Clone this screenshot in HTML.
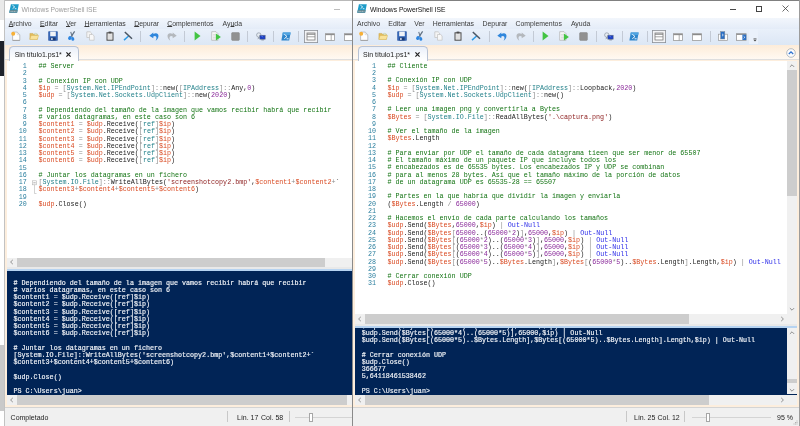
<!DOCTYPE html><html><head><meta charset="utf-8"><title>Windows PowerShell ISE</title><style>
*{box-sizing:border-box}
html,body{margin:0;padding:0}
body{width:800px;height:426px;overflow:hidden;position:relative;background:#fff;font-family:"Liberation Sans",sans-serif;font-size:7px;color:#222}
div,span,svg{position:absolute}
.cl span,.mi u{position:static}
.tt{top:4.6px;font-size:6.7px;line-height:9px;white-space:nowrap}
.mi{top:19.1px;font-size:6.9px;line-height:9px;white-space:nowrap;color:#3a3a3a}
.mi u{text-decoration-thickness:.5px;text-underline-offset:.3px}
.sep{width:1px;height:11px;background:#c3cad5}
.tab{top:46px;height:14.5px;border:1px solid #b7c2d4;border-bottom:none;border-radius:4.5px 4.5px 0 0;background:linear-gradient(#e9eff9,#f8fafd 60%,#fff)}
.tabt{top:49.8px;font-size:7px;line-height:9px;white-space:nowrap;color:#222}
.ln{width:20px;text-align:right;font-family:"Liberation Mono",monospace;font-size:6.7px;line-height:7.25px;height:7.25px;color:#2b7f9e;white-space:pre}
.cl,.co{font-family:"Liberation Mono",monospace;font-size:6.7px;line-height:7.25px;height:7.25px;white-space:pre;color:#1a1a1a}
.co{color:#eef1f6;-webkit-text-stroke:.18px #eef1f6}
.c{color:#127312}.v{color:#d94a22}.t{color:#1f7f88}.s{color:#8b1a1a}.n{color:#8a2a9a}.o{color:#8d8d8d}.k{color:#2a2ae8}
.st{top:413px;font-size:7px;line-height:9px;white-space:nowrap;color:#222}
</style></head><body><div id="root" style="left:0;top:0;width:800px;height:426px;will-change:transform;overflow:hidden">
<div style="left:0px;top:0px;width:5px;height:20px;background:#e9e9e9;"></div>
<div style="left:0px;top:41.2px;width:5px;height:34.8px;background:#1f222a;"></div>
<div style="left:0px;top:345px;width:5px;height:66px;background:#c9c9c9;"></div>
<div style="left:4px;top:0px;width:349px;height:426px;background:#fff;"></div>
<div style="left:4px;top:17.6px;width:349px;height:11.4px;background:linear-gradient(#f2f6fc,#e4ecf8);"></div>
<div style="left:4px;top:29px;width:349px;height:16px;background:linear-gradient(#e9f0fa,#dce7f5);"></div>
<div style="left:4px;top:45px;width:349px;height:15px;background:linear-gradient(#fdecd9,#fef3e6 50%,#fffaf4);"></div>
<div style="left:4px;top:60px;width:349px;height:347px;background:#fdeedd;"></div>
<div style="left:4px;top:59.2px;width:349px;height:1.3px;background:#dedede;"></div>
<div style="left:4px;top:407px;width:349px;height:19px;background:#f0f0f0;"></div>
<div style="left:4px;top:406.8px;width:349px;height:0.8px;background:#d4d4d4;"></div>
<svg class="ic" style="left:9px;top:4.3px" width="10" height="9" viewBox="0 0 10 9"><path d="M1.900.3h7.900L8.100 8.700H.2z" fill="#1f9cc9"/><path d="M.9 6.100h7.700l-.5 2.600H.2z" fill="#5f8793"/><path d="M1.500 7.400h5.800" stroke="#c9d6da" stroke-width=".7" stroke-dasharray="1.200 .5"/><path d="M3.400 1.200l2.300 1.700-2.100 1.700M5.800 4.700h1.600" stroke="#fff" stroke-width=".8" fill="none"/></svg>
<span class="tt" style="left:21.6px;color:#9b9b9b">Windows PowerShell ISE</span>
<span class="mi" style="left:8.7px"><u>A</u>rchivo</span>
<span class="mi" style="left:40.0px"><u>E</u>ditar</span>
<span class="mi" style="left:66.0px"><u>V</u>er</span>
<span class="mi" style="left:84.4px"><u>H</u>erramientas</span>
<span class="mi" style="left:134.2px"><u>D</u>epurar</span>
<span class="mi" style="left:167.2px"><u>C</u>omplementos</span>
<span class="mi" style="left:222.6px">Ay<u>u</u>da</span>
<svg class="ic" style="left:10.8px;top:31.2px" width="10" height="10" viewBox="0 0 10 10"><path d="M1.600 1.100h4.600l2.600 2.600v5.600H1.600z" fill="#fdfdfd" stroke="#a9a9a9" stroke-width=".7"/><path d="M1.600 9.500h7.200" stroke="#8f8f8f" stroke-width=".6"/><path d="M6.200 1.100v2.600h2.600" fill="none" stroke="#c4c4c4" stroke-width=".5"/><circle cx="2.200" cy="2.700" r="2" fill="#f8b035"/></svg>
<svg class="ic" style="left:29.4px;top:31.7px" width="10.2" height="8.6" viewBox="0 0 11 9"><path d="M1 1.400h3.200l.8.900h4v5.400H1z" fill="#e3bd5c" stroke="#c9a446" stroke-width=".5"/><path d="M6.300 1.100l2.300.6-.3 1.400-2.300-.4z" fill="#eef3e4" stroke="#a9c08c" stroke-width=".4"/><path d="M.9 7.900l1.300-4.300h8.200l-1.400 4.300z" fill="#f9e39b" stroke="#d6b252" stroke-width=".5"/></svg>
<svg class="ic" style="left:48.4px;top:31.3px" width="10" height="10" viewBox="0 0 10 10"><rect x=".5" y=".4" width="9" height="9.200" rx=".6" fill="#3567b8" stroke="#2a55a0" stroke-width=".5"/><rect x="2.200" y=".6" width="5.600" height="4.600" fill="#f1f3f7"/><rect x="2.400" y="6.400" width="5.200" height="3.100" fill="#1b3a75"/><rect x="3.200" y="6.900" width="1.400" height="2.100" fill="#e4e9f3"/></svg>
<svg class="ic" style="left:67.0px;top:31.3px" width="9" height="10" viewBox="0 0 9 10"><path d="M7.600.4L4.200 5.600" stroke="#5f6f80" stroke-width="1.200" fill="none"/><path d="M3.700.9L5.200 5.600" stroke="#6c7c8e" stroke-width="1.100" fill="none"/><ellipse cx="2.900" cy="7" rx="1.700" ry="2" transform="rotate(35 2.900 7)" fill="#2f86e0"/><ellipse cx="5.800" cy="7.900" rx="1.500" ry="1.900" transform="rotate(-10 5.800 7.900)" fill="#2f86e0"/></svg>
<svg class="ic" style="left:85.9px;top:31.3px" width="9" height="10" viewBox="0 0 9 10"><path d="M.8.8h3.400l1.300 1.300v4.400H.8z" fill="#f4f4f4" stroke="#c2c2c2" stroke-width=".7"/><path d="M3.500 3.500h3.200l1.400 1.400v4.300H3.500z" fill="#f8f8f8" stroke="#c2c2c2" stroke-width=".7"/></svg>
<svg class="ic" style="left:105.7px;top:31.3px" width="8" height="10" viewBox="0 0 8 10"><rect x="1" y="1.800" width="6" height="7.400" fill="#e9e9e9" stroke="#4a4a4a" stroke-width="1"/><path d="M3 3v5.600M5 3v5.600M1.500 5h5M1.500 7h5" stroke="#d2d2d2" stroke-width=".4"/><rect x="2.600" y=".6" width="2.800" height="1.800" fill="#4a4a4a"/></svg>
<svg class="ic" style="left:123.0px;top:31.3px" width="10" height="10" viewBox="0 0 10 10"><path d="M5.900 4.700L1 9.100" stroke="#2e9be6" stroke-width="1.500" fill="none"/><path d="M1.800 1L9 7.800" stroke="#4b5663" stroke-width="1.500" fill="none"/></svg>
<div class="sep" style="left:140.4px;top:30.8px"></div>
<svg class="ic" style="left:148.6px;top:31.3px" width="10" height="10" viewBox="0 0 10 10"><path d="M.3 4.700L4.300 1.500v1.500C7.500 1.200 10 3 9.400 5.800 9.100 7.500 8 9 6.600 9.800 7.600 8 7.800 6.500 7 5.600 6.400 4.900 5.400 4.900 4.300 5.600v1.700z" fill="#2f86dc"/></svg>
<svg class="ic" style="left:167.3px;top:31.3px" width="10" height="10" viewBox="0 0 10 10"><g transform="translate(10,0) scale(-1,1)"><path d="M.3 4.700L4.300 1.500v1.500C7.500 1.200 10 3 9.400 5.800 9.100 7.500 8 9 6.600 9.800 7.600 8 7.800 6.500 7 5.600 6.400 4.900 5.400 4.900 4.300 5.600v1.700z" fill="#b4b8bd"/></g></svg>
<div class="sep" style="left:184.20000000000002px;top:30.8px"></div>
<svg class="ic" style="left:193.5px;top:31.3px" width="7" height="10" viewBox="0 0 7 10"><path d="M.6.500L6.500 5 .6 9.500z" fill="#43c443"/></svg>
<svg class="ic" style="left:210.9px;top:31.3px" width="10" height="10" viewBox="0 0 10 10"><path d="M.7.700h4.300l2 2v6.600H.7z" fill="#fafafa" stroke="#b0b0b0" stroke-width=".7"/><path d="M1.900 3.400h3M1.900 4.900h3M1.900 6.400h3M1.900 7.900h3" stroke="#c0c0c0" stroke-width=".5"/><path d="M4.900 2.600L9.900 6 4.900 9.500z" fill="#43c443"/></svg>
<svg class="ic" style="left:230.8px;top:31.8px" width="9" height="9" viewBox="0 0 9 9"><rect x=".6" y=".6" width="7.800" height="7.800" rx=".8" fill="#919191" stroke="#858585" stroke-width=".5"/></svg>
<div class="sep" style="left:247.4px;top:30.8px"></div>
<svg class="ic" style="left:255.5px;top:31.8px" width="10" height="9" viewBox="0 0 10 9"><circle cx="2.800" cy="3" r="2.200" fill="#e6ecf3" stroke="#8b95a2" stroke-width=".7"/><path d="M2.200 5L1.600 7.500l1.800-1.800z" fill="#8b95a2"/><rect x="3.800" y="3.200" width="5.400" height="4" fill="#1d3fc0" stroke="#6a7484" stroke-width=".5"/><path d="M5.200 3.800l2 1.400" stroke="#5f86ff" stroke-width=".7"/><rect x="5.300" y="7.500" width="2.600" height=".8" fill="#6a7484"/></svg>
<div class="sep" style="left:273.2px;top:30.8px"></div>
<svg class="ic" style="left:281.0px;top:31.8px" width="10" height="9" viewBox="0 0 10 9"><path d="M1.800.6h7.800L8.200 8.400H.4z" fill="#2f86cc"/><path d="M1.800.6h7.800L9.200 3H1.400z" fill="#4fa3e0"/><path d="M3.300 2.300L6 4.500 3.300 6.700M5.600 6.800h2" stroke="#fff" stroke-width=".9" fill="none"/></svg>
<div class="sep" style="left:298.4px;top:30.8px"></div>
<svg class="ic" style="left:304.0px;top:29.8px" width="14" height="13" viewBox="0 0 14 13"><rect x=".4" y=".4" width="13.200" height="12.200" fill="#f3f4f6" stroke="#8d9096" stroke-width=".8"/><rect x="3" y="3" width="8" height="7" fill="#fff" stroke="#7c7c7c" stroke-width=".8"/><path d="M3 4.200h8" stroke="#7c7c7c" stroke-width="1"/><path d="M3 6.800h8" stroke="#7c7c7c" stroke-width=".7"/></svg>
<svg class="ic" style="left:324.8px;top:32.9px" width="10" height="8" viewBox="0 0 10 8"><rect x=".5" y=".6" width="9" height="6.800" fill="#fff" stroke="#9c9c9c" stroke-width=".8"/><path d="M.5 1.600h9" stroke="#8a8a8a" stroke-width="1.100"/><path d="M6.200 1.600v5.800" stroke="#8a8a8a" stroke-width=".7"/></svg>
<svg class="ic" style="left:343.5px;top:32.9px" width="10" height="8" viewBox="0 0 10 8"><rect x=".5" y=".6" width="9" height="6.800" fill="#fff" stroke="#9c9c9c" stroke-width=".8"/><path d="M.5 1.600h9" stroke="#8a8a8a" stroke-width="1.200"/></svg>
<div class="tab" style="left:9.2px;width:70.3px"></div>
<span class="tabt" style="left:14.7px">Sin título1.ps1*</span>
<svg class="ic" style="left:66.2px;top:51.8px" width="5" height="5" viewBox="0 0 5 5"><path d="M.4 .4L4.600 4.600M4.600 .4L.4 4.600" stroke="#222" stroke-width="1.200"/></svg>
<div style="left:7px;top:60.5px;width:346px;height:197.0px;background:#fff;"></div>
<div class="ln" style="top:63.00px;left:6.800000000000001px">1</div>
<div class="cl" style="top:63.00px;left:38.5px"><span class="c">## Server</span></div>
<div class="ln" style="top:70.25px;left:6.800000000000001px">2</div>
<div class="ln" style="top:77.50px;left:6.800000000000001px">3</div>
<div class="cl" style="top:77.50px;left:38.5px"><span class="c"># Conexión IP con UDP</span></div>
<div class="ln" style="top:84.75px;left:6.800000000000001px">4</div>
<div class="cl" style="top:84.75px;left:38.5px"><span class="v">$ip</span> <span class="o">=</span> <span class="o">[</span><span class="t">System.Net.IPEndPoint</span><span class="o">]::</span>new(<span class="o">[</span><span class="t">IPAddress</span><span class="o">]::</span>Any,<span class="n">0</span>)</div>
<div class="ln" style="top:92.00px;left:6.800000000000001px">5</div>
<div class="cl" style="top:92.00px;left:38.5px"><span class="v">$udp</span> <span class="o">=</span> <span class="o">[</span><span class="t">System.Net.Sockets.UdpClient</span><span class="o">]::</span>new(<span class="n">2020</span>)</div>
<div class="ln" style="top:99.25px;left:6.800000000000001px">6</div>
<div class="ln" style="top:106.50px;left:6.800000000000001px">7</div>
<div class="cl" style="top:106.50px;left:38.5px"><span class="c"># Dependiendo del tamaño de la imagen que vamos recibir habrá que recibir</span></div>
<div class="ln" style="top:113.75px;left:6.800000000000001px">8</div>
<div class="cl" style="top:113.75px;left:38.5px"><span class="c"># varios datagramas, en este caso son 6</span></div>
<div class="ln" style="top:121.00px;left:6.800000000000001px">9</div>
<div class="cl" style="top:121.00px;left:38.5px"><span class="v">$content1</span> <span class="o">=</span> <span class="v">$udp</span>.Receive(<span class="o">[</span><span class="t">ref</span><span class="o">]</span><span class="v">$ip</span>)</div>
<div class="ln" style="top:128.25px;left:6.800000000000001px">10</div>
<div class="cl" style="top:128.25px;left:38.5px"><span class="v">$content2</span> <span class="o">=</span> <span class="v">$udp</span>.Receive(<span class="o">[</span><span class="t">ref</span><span class="o">]</span><span class="v">$ip</span>)</div>
<div class="ln" style="top:135.50px;left:6.800000000000001px">11</div>
<div class="cl" style="top:135.50px;left:38.5px"><span class="v">$content3</span> <span class="o">=</span> <span class="v">$udp</span>.Receive(<span class="o">[</span><span class="t">ref</span><span class="o">]</span><span class="v">$ip</span>)</div>
<div class="ln" style="top:142.75px;left:6.800000000000001px">12</div>
<div class="cl" style="top:142.75px;left:38.5px"><span class="v">$content4</span> <span class="o">=</span> <span class="v">$udp</span>.Receive(<span class="o">[</span><span class="t">ref</span><span class="o">]</span><span class="v">$ip</span>)</div>
<div class="ln" style="top:150.00px;left:6.800000000000001px">13</div>
<div class="cl" style="top:150.00px;left:38.5px"><span class="v">$content5</span> <span class="o">=</span> <span class="v">$udp</span>.Receive(<span class="o">[</span><span class="t">ref</span><span class="o">]</span><span class="v">$ip</span>)</div>
<div class="ln" style="top:157.25px;left:6.800000000000001px">14</div>
<div class="cl" style="top:157.25px;left:38.5px"><span class="v">$content6</span> <span class="o">=</span> <span class="v">$udp</span>.Receive(<span class="o">[</span><span class="t">ref</span><span class="o">]</span><span class="v">$ip</span>)</div>
<div class="ln" style="top:164.50px;left:6.800000000000001px">15</div>
<div class="ln" style="top:171.75px;left:6.800000000000001px">16</div>
<div class="cl" style="top:171.75px;left:38.5px"><span class="c"># Juntar los datagramas en un fichero</span></div>
<div class="ln" style="top:179.00px;left:6.800000000000001px">17</div>
<div class="cl" style="top:179.00px;left:38.5px"><span class="o">[</span><span class="t">System.IO.File</span><span class="o">]::</span>WriteAllBytes(<span class="s">'screenshotcopy2.bmp'</span>,<span class="v">$content1</span><span class="o">+</span><span class="v">$content2</span><span class="o">+</span>`</div>
<div class="ln" style="top:186.25px;left:6.800000000000001px">18</div>
<div class="cl" style="top:186.25px;left:38.5px"><span class="v">$content3</span><span class="o">+</span><span class="v">$content4</span><span class="o">+</span><span class="v">$content5</span><span class="o">+</span><span class="v">$content6</span>)</div>
<div class="ln" style="top:193.50px;left:6.800000000000001px">19</div>
<div class="ln" style="top:200.75px;left:6.800000000000001px">20</div>
<div class="cl" style="top:200.75px;left:38.5px"><span class="v">$udp</span>.Close()</div>
<div style="left:7px;top:257.5px;width:346px;height:9.5px;background:#f0f0f0;"></div>
<svg class="ic" style="left:9.0px;top:259.3px" width="6" height="6" viewBox="0 0 6 6"><path d="M3.800 .9L1.600 3 3.800 5.100" stroke="#858585" stroke-width=".9" fill="none"/></svg>
<div style="left:7px;top:267.0px;width:346px;height:3.5px;background:#e9e9e9;"></div>
<div style="left:7px;top:268.5px;width:346px;height:2px;background:#b6d3f1;"></div>
<div style="left:7px;top:270.5px;width:346px;height:124.0px;background:#012456;overflow:hidden">
<div class="co" style="top:9.10px;left:6.5px"># Dependiendo del tamaño de la imagen que vamos recibir habrá que recibir</div>
<div class="co" style="top:16.35px;left:6.5px"># varios datagramas, en este caso son 6</div>
<div class="co" style="top:23.60px;left:6.5px">$content1 = $udp.Receive([ref]$ip)</div>
<div class="co" style="top:30.85px;left:6.5px">$content2 = $udp.Receive([ref]$ip)</div>
<div class="co" style="top:38.10px;left:6.5px">$content3 = $udp.Receive([ref]$ip)</div>
<div class="co" style="top:45.35px;left:6.5px">$content4 = $udp.Receive([ref]$ip)</div>
<div class="co" style="top:52.60px;left:6.5px">$content5 = $udp.Receive([ref]$ip)</div>
<div class="co" style="top:59.85px;left:6.5px">$content6 = $udp.Receive([ref]$ip)</div>
<div class="co" style="top:74.35px;left:6.5px"># Juntar los datagramas en un fichero</div>
<div class="co" style="top:81.60px;left:6.5px">[System.IO.File]::WriteAllBytes('screenshotcopy2.bmp',$content1+$content2+`</div>
<div class="co" style="top:88.85px;left:6.5px">$content3+$content4+$content5+$content6)</div>
<div class="co" style="top:103.35px;left:6.5px">$udp.Close()</div>
<div class="co" style="top:117.85px;left:6.5px">PS C:\Users\juan&gt;</div>
</div>
<div style="left:7px;top:394.5px;width:346px;height:10.5px;background:#f0f0f0;"></div>
<svg class="ic" style="left:9.0px;top:396.5px" width="6" height="6" viewBox="0 0 6 6"><path d="M3.800 .9L1.600 3 3.800 5.100" stroke="#858585" stroke-width=".9" fill="none"/></svg>
<div style="left:4px;top:0px;width:350px;height:1px;background:#b9b9b9;"></div>
<div style="left:4px;top:0px;width:1px;height:426px;background:#c2c2c2;"></div>
<svg class="ic" style="left:32.3px;top:179.5px" width="6" height="16" viewBox="0 0 6 16"><rect x=".5" y=".8" width="4" height="4" fill="#fff" stroke="#b5b5b5" stroke-width=".6"/><path d="M1.300 2.800h2.400" stroke="#777" stroke-width=".6"/><path d="M2.500 4.800V13.500H4.500" stroke="#b5b5b5" stroke-width=".6" fill="none"/></svg>
<div style="left:17px;top:257.5px;width:308px;height:9.5px;background:#cdcdcd;"></div>
<div style="left:17px;top:394.5px;width:329.8px;height:10.5px;background:#cdcdcd;"></div>
<div style="left:333.7px;top:8.6px;width:6px;height:0.9px;background:#bdbdbd;"></div>
<span class="st" style="left:10.6px">Completado</span>
<div style="left:227px;top:411px;width:1px;height:11px;background:#c8c8c8;"></div>
<span class="st" style="left:237px">Lín. 17</span><span class="st" style="left:261px">Col. 58</span>
<div style="left:289px;top:411px;width:1px;height:11px;background:#c8c8c8;"></div>
<div style="left:295px;top:416.8px;width:60px;height:0.8px;background:#d4d4d4;"></div>
<div style="left:309px;top:412.5px;width:3.5px;height:9px;background:#fff;border:.7px solid #a6a6a6"></div>
<div style="left:352.3px;top:0px;width:446.7px;height:426px;background:#fff;"></div>
<div style="left:352.3px;top:17.6px;width:446.7px;height:11.4px;background:linear-gradient(#f2f6fc,#e4ecf8);"></div>
<div style="left:352.3px;top:29px;width:446.7px;height:16px;background:linear-gradient(#e9f0fa,#dce7f5);"></div>
<div style="left:352.3px;top:45px;width:446.7px;height:15px;background:linear-gradient(#fdecd9,#fef3e6 50%,#fffaf4);"></div>
<div style="left:352.3px;top:60px;width:446.7px;height:347px;background:#fdeedd;"></div>
<div style="left:352.3px;top:59.2px;width:446.7px;height:1.3px;background:#dedede;"></div>
<div style="left:352.3px;top:407px;width:446.7px;height:19px;background:#f0f0f0;"></div>
<div style="left:352.3px;top:406.8px;width:446.7px;height:0.8px;background:#d4d4d4;"></div>
<svg class="ic" style="left:357.3px;top:4.3px" width="10" height="9" viewBox="0 0 10 9"><path d="M1.900.3h7.900L8.100 8.700H.2z" fill="#1f9cc9"/><path d="M.9 6.100h7.700l-.5 2.600H.2z" fill="#5f8793"/><path d="M1.500 7.400h5.800" stroke="#c9d6da" stroke-width=".7" stroke-dasharray="1.200 .5"/><path d="M3.400 1.200l2.300 1.700-2.100 1.700M5.800 4.700h1.600" stroke="#fff" stroke-width=".8" fill="none"/></svg>
<span class="tt" style="left:369.90000000000003px;color:#111">Windows PowerShell ISE</span>
<span class="mi" style="left:357.0px">Archivo</span>
<span class="mi" style="left:388.3px">Editar</span>
<span class="mi" style="left:414.3px">Ver</span>
<span class="mi" style="left:432.7px">Herramientas</span>
<span class="mi" style="left:482.5px">Depurar</span>
<span class="mi" style="left:515.5px">Complementos</span>
<span class="mi" style="left:570.9px">Ayuda</span>
<svg class="ic" style="left:359.1px;top:31.2px" width="10" height="10" viewBox="0 0 10 10"><path d="M1.600 1.100h4.600l2.600 2.600v5.600H1.600z" fill="#fdfdfd" stroke="#a9a9a9" stroke-width=".7"/><path d="M1.600 9.500h7.200" stroke="#8f8f8f" stroke-width=".6"/><path d="M6.200 1.100v2.600h2.600" fill="none" stroke="#c4c4c4" stroke-width=".5"/><circle cx="2.200" cy="2.700" r="2" fill="#f8b035"/></svg>
<svg class="ic" style="left:377.7px;top:31.7px" width="10.2" height="8.6" viewBox="0 0 11 9"><path d="M1 1.400h3.200l.8.900h4v5.400H1z" fill="#e3bd5c" stroke="#c9a446" stroke-width=".5"/><path d="M6.300 1.100l2.300.6-.3 1.400-2.300-.4z" fill="#eef3e4" stroke="#a9c08c" stroke-width=".4"/><path d="M.9 7.900l1.300-4.300h8.200l-1.400 4.300z" fill="#f9e39b" stroke="#d6b252" stroke-width=".5"/></svg>
<svg class="ic" style="left:396.7px;top:31.3px" width="10" height="10" viewBox="0 0 10 10"><rect x=".5" y=".4" width="9" height="9.200" rx=".6" fill="#3567b8" stroke="#2a55a0" stroke-width=".5"/><rect x="2.200" y=".6" width="5.600" height="4.600" fill="#f1f3f7"/><rect x="2.400" y="6.400" width="5.200" height="3.100" fill="#1b3a75"/><rect x="3.200" y="6.900" width="1.400" height="2.100" fill="#e4e9f3"/></svg>
<svg class="ic" style="left:415.3px;top:31.3px" width="9" height="10" viewBox="0 0 9 10"><path d="M7.600.4L4.200 5.600" stroke="#5f6f80" stroke-width="1.200" fill="none"/><path d="M3.700.9L5.200 5.600" stroke="#6c7c8e" stroke-width="1.100" fill="none"/><ellipse cx="2.900" cy="7" rx="1.700" ry="2" transform="rotate(35 2.900 7)" fill="#2f86e0"/><ellipse cx="5.800" cy="7.900" rx="1.500" ry="1.900" transform="rotate(-10 5.800 7.900)" fill="#2f86e0"/></svg>
<svg class="ic" style="left:434.2px;top:31.3px" width="9" height="10" viewBox="0 0 9 10"><path d="M.8.8h3.400l1.300 1.300v4.400H.8z" fill="#f4f4f4" stroke="#c2c2c2" stroke-width=".7"/><path d="M3.500 3.500h3.200l1.400 1.400v4.300H3.500z" fill="#f8f8f8" stroke="#c2c2c2" stroke-width=".7"/></svg>
<svg class="ic" style="left:454.0px;top:31.3px" width="8" height="10" viewBox="0 0 8 10"><rect x="1" y="1.800" width="6" height="7.400" fill="#e9e9e9" stroke="#4a4a4a" stroke-width="1"/><path d="M3 3v5.600M5 3v5.600M1.500 5h5M1.500 7h5" stroke="#d2d2d2" stroke-width=".4"/><rect x="2.600" y=".6" width="2.800" height="1.800" fill="#4a4a4a"/></svg>
<svg class="ic" style="left:471.3px;top:31.3px" width="10" height="10" viewBox="0 0 10 10"><path d="M5.900 4.700L1 9.100" stroke="#2e9be6" stroke-width="1.500" fill="none"/><path d="M1.800 1L9 7.800" stroke="#4b5663" stroke-width="1.500" fill="none"/></svg>
<div class="sep" style="left:488.7px;top:30.8px"></div>
<svg class="ic" style="left:496.9px;top:31.3px" width="10" height="10" viewBox="0 0 10 10"><path d="M.3 4.700L4.300 1.500v1.500C7.500 1.200 10 3 9.400 5.800 9.100 7.500 8 9 6.600 9.800 7.600 8 7.800 6.500 7 5.600 6.400 4.900 5.400 4.900 4.300 5.600v1.700z" fill="#2f86dc"/></svg>
<svg class="ic" style="left:515.6px;top:31.3px" width="10" height="10" viewBox="0 0 10 10"><g transform="translate(10,0) scale(-1,1)"><path d="M.3 4.700L4.300 1.500v1.500C7.500 1.200 10 3 9.400 5.800 9.100 7.500 8 9 6.600 9.800 7.600 8 7.800 6.500 7 5.600 6.400 4.900 5.400 4.900 4.300 5.600v1.700z" fill="#b4b8bd"/></g></svg>
<div class="sep" style="left:532.5px;top:30.8px"></div>
<svg class="ic" style="left:541.8px;top:31.3px" width="7" height="10" viewBox="0 0 7 10"><path d="M.6.500L6.500 5 .6 9.500z" fill="#43c443"/></svg>
<svg class="ic" style="left:559.2px;top:31.3px" width="10" height="10" viewBox="0 0 10 10"><path d="M.7.700h4.300l2 2v6.600H.7z" fill="#fafafa" stroke="#b0b0b0" stroke-width=".7"/><path d="M1.900 3.400h3M1.900 4.900h3M1.900 6.400h3M1.900 7.900h3" stroke="#c0c0c0" stroke-width=".5"/><path d="M4.900 2.600L9.900 6 4.900 9.500z" fill="#43c443"/></svg>
<svg class="ic" style="left:579.1px;top:31.8px" width="9" height="9" viewBox="0 0 9 9"><rect x=".6" y=".6" width="7.800" height="7.800" rx=".8" fill="#919191" stroke="#858585" stroke-width=".5"/></svg>
<div class="sep" style="left:595.6999999999999px;top:30.8px"></div>
<svg class="ic" style="left:603.8px;top:31.8px" width="10" height="9" viewBox="0 0 10 9"><circle cx="2.800" cy="3" r="2.200" fill="#e6ecf3" stroke="#8b95a2" stroke-width=".7"/><path d="M2.200 5L1.600 7.500l1.800-1.800z" fill="#8b95a2"/><rect x="3.800" y="3.200" width="5.400" height="4" fill="#1d3fc0" stroke="#6a7484" stroke-width=".5"/><path d="M5.200 3.800l2 1.400" stroke="#5f86ff" stroke-width=".7"/><rect x="5.300" y="7.500" width="2.600" height=".8" fill="#6a7484"/></svg>
<div class="sep" style="left:621.5px;top:30.8px"></div>
<svg class="ic" style="left:629.3px;top:31.8px" width="10" height="9" viewBox="0 0 10 9"><path d="M1.800.6h7.800L8.200 8.400H.4z" fill="#2f86cc"/><path d="M1.800.6h7.800L9.200 3H1.400z" fill="#4fa3e0"/><path d="M3.300 2.300L6 4.500 3.300 6.700M5.600 6.800h2" stroke="#fff" stroke-width=".9" fill="none"/></svg>
<div class="sep" style="left:646.6999999999999px;top:30.8px"></div>
<svg class="ic" style="left:652.3px;top:29.8px" width="14" height="13" viewBox="0 0 14 13"><rect x=".4" y=".4" width="13.200" height="12.200" fill="#f3f4f6" stroke="#8d9096" stroke-width=".8"/><rect x="3" y="3" width="8" height="7" fill="#fff" stroke="#7c7c7c" stroke-width=".8"/><path d="M3 4.200h8" stroke="#7c7c7c" stroke-width="1"/><path d="M3 6.800h8" stroke="#7c7c7c" stroke-width=".7"/></svg>
<svg class="ic" style="left:673.1px;top:32.9px" width="10" height="8" viewBox="0 0 10 8"><rect x=".5" y=".6" width="9" height="6.800" fill="#fff" stroke="#9c9c9c" stroke-width=".8"/><path d="M.5 1.600h9" stroke="#8a8a8a" stroke-width="1.100"/><path d="M6.200 1.600v5.800" stroke="#8a8a8a" stroke-width=".7"/></svg>
<svg class="ic" style="left:691.8px;top:32.9px" width="10" height="8" viewBox="0 0 10 8"><rect x=".5" y=".6" width="9" height="6.800" fill="#fff" stroke="#9c9c9c" stroke-width=".8"/><path d="M.5 1.600h9" stroke="#8a8a8a" stroke-width="1.200"/></svg>
<div class="sep" style="left:709.9px;top:30.8px"></div>
<svg class="ic" style="left:717.5px;top:31.3px" width="10" height="10" viewBox="0 0 10 10"><rect x=".6" y="3.200" width="8.800" height="6.200" fill="#fff" stroke="#9a9a9a" stroke-width=".7"/><rect x="2.600" y=".6" width="4.200" height="7.400" fill="#2b6fc4" stroke="#7f8a98" stroke-width=".5"/><path d="M4 2.800l1.300 1.200L4 5.200" stroke="#fff" stroke-width=".7" fill="none"/></svg>
<svg class="ic" style="left:736.1px;top:32.8px" width="11" height="8" viewBox="0 0 11 8"><rect x=".5" y=".7" width="9.600" height="6.600" fill="#fff" stroke="#8a8a8a" stroke-width=".7"/><path d="M.5 1.400h9.600" stroke="#8a8a8a" stroke-width="1"/><rect x="6.400" y="1.600" width="3.800" height="5.400" fill="#2b6fc4"/><path d="M7.600 3.200l1.200 1.100-1.200 1.100" stroke="#fff" stroke-width=".7" fill="none"/></svg>
<div style="left:749.3px;top:29px;width:9px;height:15px;background:#eaf1fb"></div>
<svg class="ic" style="left:753.0px;top:38.0px" width="4" height="4" viewBox="0 0 4 4"><path d="M.5 .8h3" stroke="#444" stroke-width=".7"/><path d="M.4 1.800h3.200L2 3.600z" fill="#444"/></svg>
<div class="tab" style="left:357.5px;width:70.3px"></div>
<span class="tabt" style="left:363.0px">Sin título1.ps1*</span>
<svg class="ic" style="left:414.5px;top:51.8px" width="5" height="5" viewBox="0 0 5 5"><path d="M.4 .4L4.600 4.600M4.600 .4L.4 4.600" stroke="#222" stroke-width="1.200"/></svg>
<div style="left:355.3px;top:60.5px;width:441.95px;height:253.89999999999998px;background:#fff;"></div>
<div class="ln" style="top:62.80px;left:356px">1</div>
<div class="cl" style="top:62.80px;left:387.4px"><span class="c">## Cliente</span></div>
<div class="ln" style="top:70.05px;left:356px">2</div>
<div class="ln" style="top:77.30px;left:356px">3</div>
<div class="cl" style="top:77.30px;left:387.4px"><span class="c"># Conexión IP con UDP</span></div>
<div class="ln" style="top:84.55px;left:356px">4</div>
<div class="cl" style="top:84.55px;left:387.4px"><span class="v">$ip</span> <span class="o">=</span> <span class="o">[</span><span class="t">System.Net.IPEndPoint</span><span class="o">]::</span>new(<span class="o">[</span><span class="t">IPAddress</span><span class="o">]::</span>Loopback,<span class="n">2020</span>)</div>
<div class="ln" style="top:91.80px;left:356px">5</div>
<div class="cl" style="top:91.80px;left:387.4px"><span class="v">$udp</span> <span class="o">=</span> <span class="o">[</span><span class="t">System.Net.Sockets.UdpClient</span><span class="o">]::</span>new()</div>
<div class="ln" style="top:99.05px;left:356px">6</div>
<div class="ln" style="top:106.30px;left:356px">7</div>
<div class="cl" style="top:106.30px;left:387.4px"><span class="c"># Leer una imagen png y convertirla a Bytes</span></div>
<div class="ln" style="top:113.55px;left:356px">8</div>
<div class="cl" style="top:113.55px;left:387.4px"><span class="v">$Bytes</span> <span class="o">=</span> <span class="o">[</span><span class="t">System.IO.File</span><span class="o">]::</span>ReadAllBytes(<span class="s">'.\captura.png'</span>)</div>
<div class="ln" style="top:120.80px;left:356px">9</div>
<div class="ln" style="top:128.05px;left:356px">10</div>
<div class="cl" style="top:128.05px;left:387.4px"><span class="c"># Ver el tamaño de la imagen</span></div>
<div class="ln" style="top:135.30px;left:356px">11</div>
<div class="cl" style="top:135.30px;left:387.4px"><span class="v">$Bytes</span>.Length</div>
<div class="ln" style="top:142.55px;left:356px">12</div>
<div class="ln" style="top:149.80px;left:356px">13</div>
<div class="cl" style="top:149.80px;left:387.4px"><span class="c"># Para enviar por UDP el tamaño de cada datagrama tieen que ser menor de 65507</span></div>
<div class="ln" style="top:157.05px;left:356px">14</div>
<div class="cl" style="top:157.05px;left:387.4px"><span class="c"># El tamaño máximo de un paquete IP que incluye todos los</span></div>
<div class="ln" style="top:164.30px;left:356px">15</div>
<div class="cl" style="top:164.30px;left:387.4px"><span class="c"># encabezados es de 65535 bytes. Los encabezados IP y UDP se combinan</span></div>
<div class="ln" style="top:171.55px;left:356px">16</div>
<div class="cl" style="top:171.55px;left:387.4px"><span class="c"># para al menos 28 bytes. Así que el tamaño máximo de la porción de datos</span></div>
<div class="ln" style="top:178.80px;left:356px">17</div>
<div class="cl" style="top:178.80px;left:387.4px"><span class="c"># de un datagrama UDP es 65535-28 == 65507</span></div>
<div class="ln" style="top:186.05px;left:356px">18</div>
<div class="ln" style="top:193.30px;left:356px">19</div>
<div class="cl" style="top:193.30px;left:387.4px"><span class="c"># Partes en la que habría que dividir la imagen y enviarla</span></div>
<div class="ln" style="top:200.55px;left:356px">20</div>
<div class="cl" style="top:200.55px;left:387.4px">(<span class="v">$Bytes</span>.Length <span class="o">/</span> <span class="n">65000</span>)</div>
<div class="ln" style="top:207.80px;left:356px">21</div>
<div class="ln" style="top:215.05px;left:356px">22</div>
<div class="cl" style="top:215.05px;left:387.4px"><span class="c"># Hacemos el envío de cada parte calculando los tamaños</span></div>
<div class="ln" style="top:222.30px;left:356px">23</div>
<div class="cl" style="top:222.30px;left:387.4px"><span class="v">$udp</span>.Send(<span class="v">$Bytes</span>,<span class="n">65000</span>,<span class="v">$ip</span>) <span class="o">|</span> <span class="k">Out-Null</span></div>
<div class="ln" style="top:229.55px;left:356px">24</div>
<div class="cl" style="top:229.55px;left:387.4px"><span class="v">$udp</span>.Send(<span class="v">$Bytes</span><span class="o">[</span><span class="n">65000</span>..(<span class="n">65000</span><span class="o">*</span><span class="n">2</span>)<span class="o">]</span>,<span class="n">65000</span>,<span class="v">$ip</span>) <span class="o">|</span> <span class="k">Out-Null</span></div>
<div class="ln" style="top:236.80px;left:356px">25</div>
<div class="cl" style="top:236.80px;left:387.4px"><span class="v">$udp</span>.Send(<span class="v">$Bytes</span><span class="o">[</span>(<span class="n">65000</span><span class="o">*</span><span class="n">2</span>)..(<span class="n">65000</span><span class="o">*</span><span class="n">3</span>)<span class="o">]</span>,<span class="n">65000</span>,<span class="v">$ip</span>) <span class="o">|</span> <span class="k">Out-Null</span></div>
<div class="ln" style="top:244.05px;left:356px">26</div>
<div class="cl" style="top:244.05px;left:387.4px"><span class="v">$udp</span>.Send(<span class="v">$Bytes</span><span class="o">[</span>(<span class="n">65000</span><span class="o">*</span><span class="n">3</span>)..(<span class="n">65000</span><span class="o">*</span><span class="n">4</span>)<span class="o">]</span>,<span class="n">65000</span>,<span class="v">$ip</span>) <span class="o">|</span> <span class="k">Out-Null</span></div>
<div class="ln" style="top:251.30px;left:356px">27</div>
<div class="cl" style="top:251.30px;left:387.4px"><span class="v">$udp</span>.Send(<span class="v">$Bytes</span><span class="o">[</span>(<span class="n">65000</span><span class="o">*</span><span class="n">4</span>)..(<span class="n">65000</span><span class="o">*</span><span class="n">5</span>)<span class="o">]</span>,<span class="n">65000</span>,<span class="v">$ip</span>) <span class="o">|</span> <span class="k">Out-Null</span></div>
<div class="ln" style="top:258.55px;left:356px">28</div>
<div class="cl" style="top:258.55px;left:387.4px"><span class="v">$udp</span>.Send(<span class="v">$Bytes</span><span class="o">[</span>(<span class="n">65000</span><span class="o">*</span><span class="n">5</span>)..<span class="v">$Bytes</span>.Length<span class="o">]</span>,<span class="v">$Bytes</span><span class="o">[</span>(<span class="n">65000</span><span class="o">*</span><span class="n">5</span>)..<span class="v">$Bytes</span>.Length<span class="o">]</span>.Length,<span class="v">$ip</span>) <span class="o">|</span> <span class="k">Out-Null</span></div>
<div class="ln" style="top:265.80px;left:356px">29</div>
<div class="ln" style="top:273.05px;left:356px">30</div>
<div class="cl" style="top:273.05px;left:387.4px"><span class="c"># Cerrar conexión UDP</span></div>
<div class="ln" style="top:280.30px;left:356px">31</div>
<div class="cl" style="top:280.30px;left:387.4px"><span class="v">$udp</span>.Close()</div>
<div style="left:355.3px;top:314.4px;width:441.95px;height:9.5px;background:#f0f0f0;"></div>
<svg class="ic" style="left:357.3px;top:316.2px" width="6" height="6" viewBox="0 0 6 6"><path d="M3.800 .9L1.600 3 3.800 5.100" stroke="#858585" stroke-width=".9" fill="none"/></svg>
<div style="left:355.3px;top:323.9px;width:441.95px;height:3.6000000000000227px;background:#e9e9e9;"></div>
<div style="left:355.3px;top:325.5px;width:441.95px;height:2px;background:#b6d3f1;"></div>
<div style="left:355.3px;top:327.5px;width:441.95px;height:67.0px;background:#012456;overflow:hidden">
<div class="co" style="top:-4.95px;left:6.399999999999977px">$udp.Send($Bytes[(65000*3)..(65000*4)],65000,$ip) | Out-Null</div>
<div class="co" style="top:2.30px;left:6.399999999999977px">$udp.Send($Bytes[(65000*4)..(65000*5)],65000,$ip) | Out-Null</div>
<div class="co" style="top:9.55px;left:6.399999999999977px">$udp.Send($Bytes[(65000*5)..$Bytes.Length],$Bytes[(65000*5)..$Bytes.Length].Length,$ip) | Out-Null</div>
<div class="co" style="top:24.05px;left:6.399999999999977px"># Cerrar conexión UDP</div>
<div class="co" style="top:31.30px;left:6.399999999999977px">$udp.Close()</div>
<div class="co" style="top:38.55px;left:6.399999999999977px">366677</div>
<div class="co" style="top:45.80px;left:6.399999999999977px">5,64118461538462</div>
<div class="co" style="top:60.30px;left:6.399999999999977px">PS C:\Users\juan&gt;</div>
</div>
<div style="left:355.3px;top:394.5px;width:441.95px;height:10.5px;background:#f0f0f0;"></div>
<svg class="ic" style="left:357.3px;top:396.5px" width="6" height="6" viewBox="0 0 6 6"><path d="M3.800 .9L1.600 3 3.800 5.100" stroke="#858585" stroke-width=".9" fill="none"/></svg>
<div style="left:352.3px;top:0px;width:447px;height:1px;background:#808080;"></div>
<div style="left:352.3px;top:0px;width:0.9px;height:426px;background:#8a8a8a;"></div>
<div style="left:798.9px;top:0px;width:1.1px;height:426px;background:#9c9c9c;"></div>
<div style="left:787px;top:60.5px;width:10.25px;height:253.9px;background:#f0f0f0;"></div>
<div style="left:787px;top:70.3px;width:10.25px;height:125.7px;background:#cdcdcd;"></div>
<svg class="ic" style="left:789.0px;top:62.5px" width="6" height="6" viewBox="0 0 6 6"><path d="M.9 3.900L3 1.800 5.100 3.900" stroke="#858585" stroke-width=".9" fill="none"/></svg>
<svg class="ic" style="left:789.0px;top:306.0px" width="6" height="6" viewBox="0 0 6 6"><path d="M.9 2.100L3 4.200 5.100 2.100" stroke="#858585" stroke-width=".9" fill="none"/></svg>
<div style="left:365px;top:314.4px;width:323.5px;height:9.5px;background:#cdcdcd;"></div>
<svg class="ic" style="left:779.0px;top:316.2px" width="6" height="6" viewBox="0 0 6 6"><path d="M2.200 .9L4.400 3 2.200 5.100" stroke="#858585" stroke-width=".9" fill="none"/></svg>
<div style="left:787px;top:314.4px;width:10.25px;height:9.5px;background:#f0f0f0;"></div>
<div style="left:787px;top:327.5px;width:10.25px;height:66.8px;background:#f0f0f0;"></div>
<svg class="ic" style="left:789.0px;top:330.0px" width="6" height="6" viewBox="0 0 6 6"><path d="M.9 3.900L3 1.800 5.100 3.900" stroke="#858585" stroke-width=".9" fill="none"/></svg>
<svg class="ic" style="left:789.0px;top:387.0px" width="6" height="6" viewBox="0 0 6 6"><path d="M.9 2.100L3 4.200 5.100 2.100" stroke="#858585" stroke-width=".9" fill="none"/></svg>
<div style="left:787px;top:379.3px;width:10.25px;height:3.4px;background:#cdcdcd;"></div>
<div style="left:365px;top:394.5px;width:343.5px;height:10.5px;background:#cdcdcd;"></div>
<svg class="ic" style="left:779.0px;top:396.5px" width="6" height="6" viewBox="0 0 6 6"><path d="M2.200 .9L4.400 3 2.200 5.100" stroke="#858585" stroke-width=".9" fill="none"/></svg>
<div style="left:787px;top:394.5px;width:10.25px;height:10.5px;background:#f0f0f0;"></div>
<div style="left:729.6px;top:8.6px;width:6px;height:0.8px;background:#4a4a4a;"></div>
<div style="left:756px;top:6px;width:6px;height:6px;background:transparent;border:.8px solid #444"></div>
<svg class="ic" style="left:782.1px;top:5.4px" width="7" height="7" viewBox="0 0 7 7"><path d="M.5 .5L6.500 6.500M6.500 .5L.5 6.500" stroke="#444" stroke-width=".8"/></svg>
<svg class="ic" style="left:785.5px;top:48px" width="10" height="10" viewBox="0 0 10 10"><circle cx="5" cy="5" r="4.300" fill="#fafbfd" stroke="#9aa3ad" stroke-width=".7"/><path d="M2.800 6L5 3.900 7.200 6" stroke="#2f74d0" stroke-width="1.300" fill="none"/></svg>
<div style="left:626px;top:411px;width:1px;height:11px;background:#c8c8c8;"></div>
<span class="st" style="left:634px">Lín. 25</span><span class="st" style="left:657.5px">Col. 12</span>
<div style="left:684px;top:411px;width:1px;height:11px;background:#c8c8c8;"></div>
<div style="left:691.5px;top:416.8px;width:79px;height:0.8px;background:#d4d4d4;"></div>
<div style="left:706px;top:412.5px;width:3.5px;height:9px;background:#fff;border:.7px solid #a6a6a6"></div>
<span class="st" style="left:777px">95 %</span>
<svg class="ic" style="left:793px;top:420px" width="5" height="5" viewBox="0 0 5 5"><g fill="#b0b0b0"><rect x="3.500" y=".5" width="1" height="1"/><rect x="2" y="2" width="1" height="1"/><rect x="3.500" y="2" width="1" height="1"/><rect x=".5" y="3.500" width="1" height="1"/><rect x="2" y="3.500" width="1" height="1"/><rect x="3.500" y="3.500" width="1" height="1"/></g></svg>
</div></body></html>
